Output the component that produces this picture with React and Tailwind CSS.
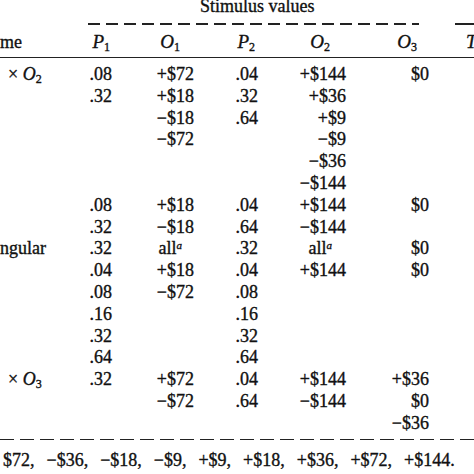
import React from "react";

const rows = [
  [["×", "O", "2"], ".08", "+$72", ".04", "+$144", "$0"],
  ["", ".32", "+$18", ".32", "+$36", ""],
  ["", "", "−$18", ".64", "+$9", ""],
  ["", "", "−$72", "", "−$9", ""],
  ["", "", "", "", "−$36", ""],
  ["", "", "", "", "−$144", ""],
  ["", ".08", "+$18", ".04", "+$144", "$0"],
  ["", ".32", "−$18", ".64", "−$144", ""],
  ["ngular", ".32", "all", ".32", "all", "$0"],
  ["", ".04", "+$18", ".04", "+$144", "$0"],
  ["", ".08", "−$72", ".08", "", ""],
  ["", ".16", "", ".16", "", ""],
  ["", ".32", "", ".32", "", ""],
  ["", ".64", "", ".64", "", ""],
  [["×", "O", "3"], ".32", "+$72", ".04", "+$144", "+$36"],
  ["", "", "−$72", ".64", "−$144", "$0"],
  ["", "", "", "", "", "−$36"],
];

function Label({ value }) {
  if (Array.isArray(value)) {
    return (
      <span className="pl-[8px]">
        {value[0]} <i>{value[1]}</i>
        <sub className="text-[12px]">{value[2]}</sub>
      </span>
    );
  }
  return <span>{value}</span>;
}

function Money({ value, pad }) {
  if (value === "all") {
    return (
      <span className={pad}>
        all<sup className="italic text-[11px]">a</sup>
      </span>
    );
  }
  return <span>{value}</span>;
}

function Sym({ l, n }) {
  return (
    <span className="italic text-[19px]">
      {l}
      <sub className="not-italic text-[12px]">{n}</sub>
    </span>
  );
}

export default function App() {
  return (
    <div className="w-[474px] h-[474px] overflow-hidden bg-white text-[#111] font-['Liberation_Serif',serif] text-[18px] [-webkit-text-stroke:0.35px_#111]">
      <div className="-mt-[5px] flex flex-col">
        <div className="h-[22px] leading-[22px] pl-[200px] whitespace-nowrap">
          Stimulus values
        </div>
        <div className="mt-[6px] flex gap-[36px]">
          <div className="ml-[88px] w-[342px] h-[1.5px] bg-[linear-gradient(to_right,#222_12px,transparent_12px)] bg-[length:18px_1.5px]" />
          <div className="w-[20px] h-[1.5px] bg-[#222]" />
        </div>
        <div className="mt-[6px] h-[22px] leading-[22px] flex whitespace-nowrap">
          <div className="w-[88px]">me</div>
          <div className="w-[24px] text-right pr-[2px]"><Sym l="P" n="1" /></div>
          <div className="w-[82px] text-right pr-[14px]"><Sym l="O" n="1" /></div>
          <div className="w-[64px] text-right pr-[3px]"><Sym l="P" n="2" /></div>
          <div className="w-[88px] text-right pr-[16px]"><Sym l="O" n="2" /></div>
          <div className="w-[83px] text-right pr-[12px]"><Sym l="O" n="3" /></div>
          <div className="w-[45px] pl-[37px] italic text-[19px]">T</div>
        </div>
        <div className="mt-[4px] h-[1.5px] bg-[#222]" />
        <div className="mt-[6px] flex flex-col">
          {rows.map((r, i) => (
            <div key={i} className="h-[21.8px] leading-[21.8px] flex whitespace-nowrap">
              <div className="w-[88px]"><Label value={r[0]} /></div>
              <div className="w-[24px] text-right">{r[1]}</div>
              <div className="w-[82px] text-right"><Money value={r[2]} pad="pr-[12px]" /></div>
              <div className="w-[64px] text-right">{r[3]}</div>
              <div className="w-[88px] text-right"><Money value={r[4]} pad="pr-[14px]" /></div>
              <div className="w-[83px] text-right">{r[5]}</div>
            </div>
          ))}
        </div>
        <div className="mt-[4px] h-[1.5px] bg-[linear-gradient(to_right,#222_14px,transparent_14px)] bg-[length:20px_1.5px]" />
        <div className="mt-[9px] h-[22px] leading-[22px] pl-[3px] whitespace-nowrap [word-spacing:7.5px]">
          $72, −$36, −$18, −$9, +$9, +$18, +$36, +$72, +$144.
        </div>
      </div>
    </div>
  );
}
